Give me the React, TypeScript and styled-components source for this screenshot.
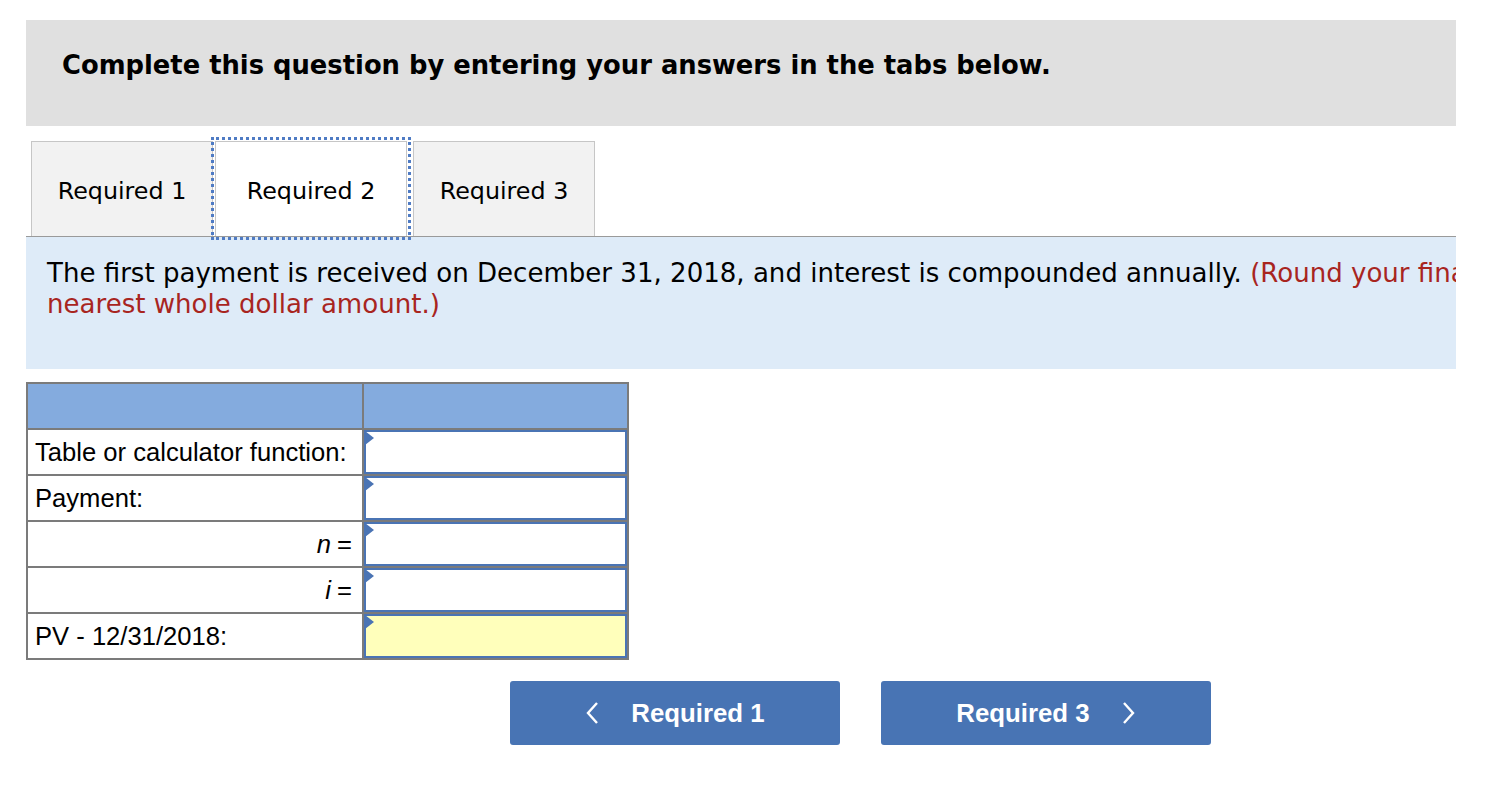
import React from 'react';
import styled, { createGlobalStyle } from 'styled-components';

const GlobalStyle = createGlobalStyle`
  html, body {
    margin: 0;
    padding: 0;
    background: #ffffff;
  }
  body {
    font-family: 'DejaVu Sans', Verdana, sans-serif;
    color: #000;
  }
`;

const Page = styled.div`
  width: 1512px;
  height: 810px;
  padding: 20px 0 0 26px;
  box-sizing: border-box;
  overflow: hidden;
`;

const Column = styled.div`
  width: 1430px;
`;

const Banner = styled.div`
  background: #e0e0e0;
  height: 106px;
  padding: 0 0 0 36px;
  display: flex;
  align-items: center;
  box-sizing: border-box;
`;

const BannerText = styled.h1`
  margin: 0 0 16px;
  font-size: 25.8px;
  font-weight: 700;
`;

const TabBar = styled.div`
  display: flex;
  align-items: flex-end;
  gap: 2px;
  margin-top: 15px;
  padding-left: 5px;
  border-bottom: 1px solid #9a9a9a;
`;

const Tab = styled.button<{ $active?: boolean }>`
  width: ${({ $active }) => ($active ? '192px' : '182px')};
  height: 95px;
  margin-right: ${({ $active }) => ($active ? '4px' : '0')};
  background: ${({ $active }) => ($active ? '#ffffff' : '#f2f2f2')};
  border: 1px solid #c6c6c6;
  border-bottom: none;
  font-family: 'DejaVu Sans', Verdana, sans-serif;
  font-size: 23.8px;
  color: #000;
  padding: 3px 0 0;
  box-sizing: border-box;
  outline: ${({ $active }) => ($active ? '3px dotted #4f7bc4' : 'none')};
  outline-offset: 1px;
`;

const Prompt = styled.div`
  background: #deebf8;
  height: 132px;
  padding: 21px 0 0 21px;
  box-sizing: border-box;
  overflow: hidden;
  font-size: 26.05px;
  line-height: 31px;
  white-space: nowrap;
`;

const Hint = styled.span`
  color: #a8251f;
`;

const Table = styled.div`
  margin-top: 13px;
  width: 603px;
  display: grid;
  grid-template-columns: 334px 1fr;
  border: 2px solid #7b7b7b;
  background: #7b7b7b;
  gap: 2px;
  box-sizing: border-box;
`;

const HeadCell = styled.div`
  background: #84abde;
  height: 44px;
`;

const LabelCell = styled.div<{ $right?: boolean }>`
  background: #ffffff;
  height: 44px;
  display: flex;
  align-items: center;
  justify-content: ${({ $right }) => ($right ? 'flex-end' : 'flex-start')};
  padding: 1px 10px 0 7px;
  font-family: 'Liberation Sans', Arial, sans-serif;
  font-size: 25.6px;
  box-sizing: border-box;
  white-space: nowrap;
`;

const Var = styled.i`
  margin-right: 6px;
`;

const InputCell = styled.div`
  background: #ffffff;
  height: 44px;
  position: relative;
`;

const Field = styled.input<{ $highlight?: boolean }>`
  width: 100%;
  height: 100%;
  box-sizing: border-box;
  border: 2px solid #4a74b4;
  background: ${({ $highlight }) => ($highlight ? '#ffffbb' : '#ffffff')};
  outline: none;
  margin: 0;
  display: block;
`;

const Marker = styled.span`
  position: absolute;
  left: 1px;
  top: 1px;
  width: 0;
  height: 0;
  border-top: 7px solid transparent;
  border-bottom: 7px solid transparent;
  border-left: 9px solid #4a74b4;
`;

const NavRow = styled.div`
  display: flex;
  gap: 41px;
  margin: 21px 0 0 484px;
`;

const NavButton = styled.button`
  width: 330px;
  height: 64px;
  background: #4874b4;
  border: none;
  border-radius: 3px;
  color: #ffffff;
  font-family: 'Liberation Sans', Arial, sans-serif;
  font-weight: 700;
  font-size: 25.8px;
  display: flex;
  align-items: center;
  justify-content: center;
  gap: 32px;
  padding: 0;
  svg {
    display: block;
  }
`;

const Chevron = ({ dir }: { dir: 'left' | 'right' }) => (
  <svg width="14" height="24" viewBox="0 0 14 24" fill="none">
    <path
      d={dir === 'left' ? 'M12 2 L3 12 L12 22' : 'M2 2 L11 12 L2 22'}
      stroke="#fff"
      strokeWidth="2.4"
    />
  </svg>
);

type Row = { label: React.ReactNode; right?: boolean; highlight?: boolean };

const rows: Row[] = [
  { label: 'Table or calculator function:' },
  { label: 'Payment:' },
  { label: <><Var>n</Var>=</>, right: true },
  { label: <><Var>i</Var>=</>, right: true },
  { label: 'PV - 12/31/2018:', highlight: true },
];

export default function App() {
  return (
    <Page>
      <GlobalStyle />
      <Column>
        <Banner>
          <BannerText>Complete this question by entering your answers in the tabs below.</BannerText>
        </Banner>
        <TabBar>
          <Tab>Required 1</Tab>
          <Tab $active>Required 2</Tab>
          <Tab>Required 3</Tab>
        </TabBar>
        <Prompt>
          The first payment is received on December 31, 2018, and interest is compounded annually.{' '}
          <Hint>(Round your final answer to the</Hint>
          <br />
          <Hint>nearest whole dollar amount.)</Hint>
        </Prompt>
      </Column>
      <Table>
        <HeadCell />
        <HeadCell />
        {rows.map((r, i) => (
          <React.Fragment key={i}>
            <LabelCell $right={r.right}>{r.label}</LabelCell>
            <InputCell>
              <Field $highlight={r.highlight} />
              <Marker />
            </InputCell>
          </React.Fragment>
        ))}
      </Table>
      <NavRow>
        <NavButton>
          <Chevron dir="left" />
          Required 1
        </NavButton>
        <NavButton>
          Required 3
          <Chevron dir="right" />
        </NavButton>
      </NavRow>
    </Page>
  );
}
